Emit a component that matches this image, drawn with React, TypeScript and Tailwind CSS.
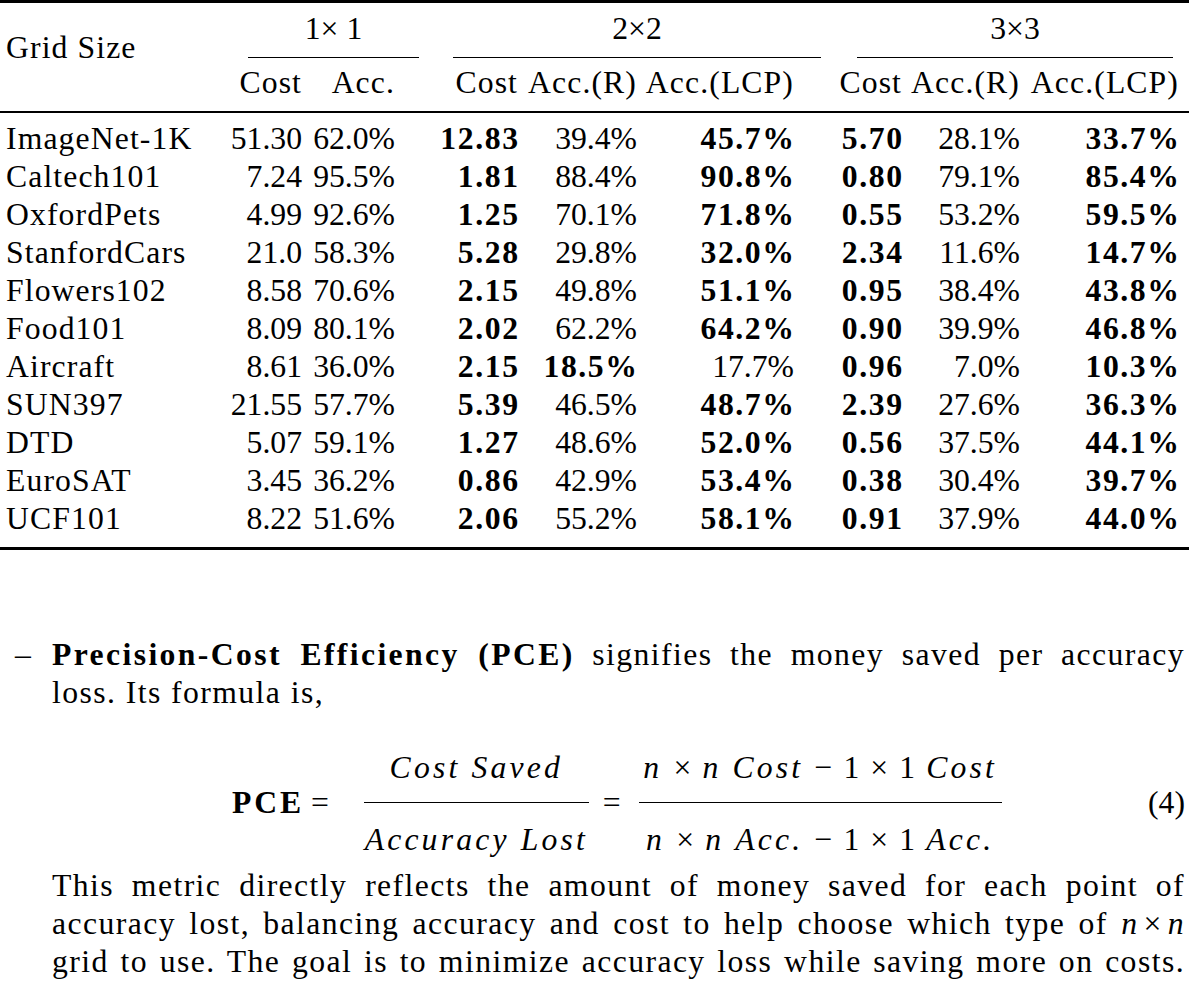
import React from 'react'

// table data: '*' marks a bold cell
const rows: string[][] = [
    ['ImageNet-1K', '51.30', '62.0%', '*12.83', '39.4%', '*45.7%', '*5.70', '28.1%', '*33.7%'],
    ['Caltech101', '7.24', '95.5%', '*1.81', '88.4%', '*90.8%', '*0.80', '79.1%', '*85.4%'],
    ['OxfordPets', '4.99', '92.6%', '*1.25', '70.1%', '*71.8%', '*0.55', '53.2%', '*59.5%'],
    ['StanfordCars', '21.0', '58.3%', '*5.28', '29.8%', '*32.0%', '*2.34', '11.6%', '*14.7%'],
    ['Flowers102', '8.58', '70.6%', '*2.15', '49.8%', '*51.1%', '*0.95', '38.4%', '*43.8%'],
    ['Food101', '8.09', '80.1%', '*2.02', '62.2%', '*64.2%', '*0.90', '39.9%', '*46.8%'],
    ['Aircraft', '8.61', '36.0%', '*2.15', '*18.5%', '17.7%', '*0.96', '7.0%', '*10.3%'],
    ['SUN397', '21.55', '57.7%', '*5.39', '46.5%', '*48.7%', '*2.39', '27.6%', '*36.3%'],
    ['DTD', '5.07', '59.1%', '*1.27', '48.6%', '*52.0%', '*0.56', '37.5%', '*44.1%'],
    ['EuroSAT', '3.45', '36.2%', '*0.86', '42.9%', '*53.4%', '*0.38', '30.4%', '*39.7%'],
    ['UCF101', '8.22', '51.6%', '*2.06', '55.2%', '*58.1%', '*0.91', '37.9%', '*44.0%'],
]

const subHeaders = ['Cost', 'Acc.', 'Cost', 'Acc.(R)', 'Acc.(LCP)', 'Cost', 'Acc.(R)', 'Acc.(LCP)']

function Value({ v }: { v: string }) {
    if (v.startsWith('*')) {
        return (
            <div className="text-right">
                <span className="font-bold tracking-[0.05em] mr-[-0.05em]">{v.slice(1)}</span>
            </div>
        )
    }
    return <div className="text-right">{v}</div>
}

function Fraction({ num, den, width }: { num: React.ReactNode; den: React.ReactNode; width: string }) {
    return (
        <div className={`flex flex-col items-center ${width}`}>
            <div className="pt-[3px] pb-[18px] leading-[32px] whitespace-nowrap">{num}</div>
            <div className="h-[1.3px] w-full bg-black" />
            <div className="pt-[21px] leading-[32px] whitespace-nowrap">{den}</div>
        </div>
    )
}

function MathText({ children }: { children: React.ReactNode }) {
    return <i className="tracking-[0.1em]">{children}</i>
}

export default function App() {
    return (
        <div className="min-h-screen bg-white text-black font-['Liberation_Serif',serif] text-[31.7px] leading-[38px]">
            <div className="w-[1189px]">
                {/* Table */}
                <div className="border-t-[3px] border-black">
                    <div className="flex">
                        <div className="w-[210px] shrink-0 pl-[6px] pt-[26px] tracking-[0.035em]">Grid Size</div>
                        <div className="flex-1">
                            <div className="flex pt-[7px]">
                                <div className="ml-[38px] w-[171px] text-center">1× 1</div>
                                <div className="ml-[34px] w-[368px] text-center">2×2</div>
                                <div className="ml-[36px] w-[316px] text-center">3×3</div>
                            </div>
                            <div className="mt-[9px] flex">
                                <div className="ml-[38px] w-[171px] h-px bg-black" />
                                <div className="ml-[34px] w-[368px] h-px bg-black" />
                                <div className="ml-[36px] w-[316px] h-px bg-black" />
                            </div>
                            <div className="mt-[6px] grid grid-cols-[92px_93px_123px_119px_157px_108px_118px_159px] tracking-[0.035em]">
                                {subHeaders.map((h, i) => (
                                    <div key={i} className="text-right whitespace-nowrap">
                                        {h}
                                    </div>
                                ))}
                            </div>
                        </div>
                    </div>
                    <div className="mt-[9px] h-[2px] bg-black" />
                    <div className="pt-[7px]">
                        {rows.map((r) => (
                            <div
                                key={r[0]}
                                className="grid grid-cols-[210px_92px_93px_123px_119px_157px_108px_118px_159px] h-[38px] whitespace-nowrap"
                            >
                                <div className="pl-[6px] tracking-[0.035em]">{r[0]}</div>
                                {r.slice(1).map((v, i) => (
                                    <Value key={i} v={v} />
                                ))}
                            </div>
                        ))}
                    </div>
                    <div className="mt-[9px] h-[3px] bg-black" />
                </div>

                {/* PCE bullet */}
                <div className="mt-[86px] flex tracking-[0.045em]">
                    <span className="w-[52px] shrink-0 pl-[15px]">–</span>
                    <div className="w-[1133px]">
                        <span className="block text-justify [text-align-last:justify]">
                            <b className="tracking-[0.075em]">Precision-Cost Efficiency (PCE)</b> signifies the money
                            saved per accuracy
                        </span>
                        <span className="block">loss. Its formula is,</span>
                    </div>
                </div>

                {/* Equation (4) */}
                <div className="mt-[37px] flex items-center pl-[232px] pr-[4px]">
                    <span className="font-bold tracking-[0.09em] leading-[32px]">PCE</span>
                    <span className="ml-[7px] leading-[32px]">=</span>
                    <Fraction
                        width="ml-[35px] w-[225px]"
                        num={<MathText>Cost Saved</MathText>}
                        den={<MathText>Accuracy Lost</MathText>}
                    />
                    <span className="ml-[14px] leading-[32px]">=</span>
                    <Fraction
                        width="ml-[18px] w-[363px]"
                        num={
                            <span className="[word-spacing:0.1em]">
                                <MathText>n</MathText> × <MathText>n</MathText> <MathText>Cost</MathText> − 1 × 1{' '}
                                <MathText>Cost</MathText>
                            </span>
                        }
                        den={
                            <span className="[word-spacing:0.1em]">
                                <MathText>n</MathText> × <MathText>n</MathText> <MathText>Acc.</MathText> − 1 × 1{' '}
                                <MathText>Acc.</MathText>
                            </span>
                        }
                    />
                    <span className="ml-auto leading-[32px]">(4)</span>
                </div>

                {/* Paragraph */}
                <div className="mt-[11px] pl-[52px] pr-[4px] tracking-[0.045em]">
                    <span className="block text-justify [text-align-last:justify]">
                        This metric directly reflects the amount of money saved for each point of
                    </span>
                    <span className="block text-justify [text-align-last:justify]">
                        accuracy lost, balancing accuracy and cost to help choose which type of{' '}
                        <i>n</i>
                        <span className="mx-[5px]">×</span>
                        <i>n</i>
                    </span>
                    <span className="block text-justify [text-align-last:justify]">
                        grid to use. The goal is to minimize accuracy loss while saving more on costs.
                    </span>
                </div>
            </div>
        </div>
    )
}
